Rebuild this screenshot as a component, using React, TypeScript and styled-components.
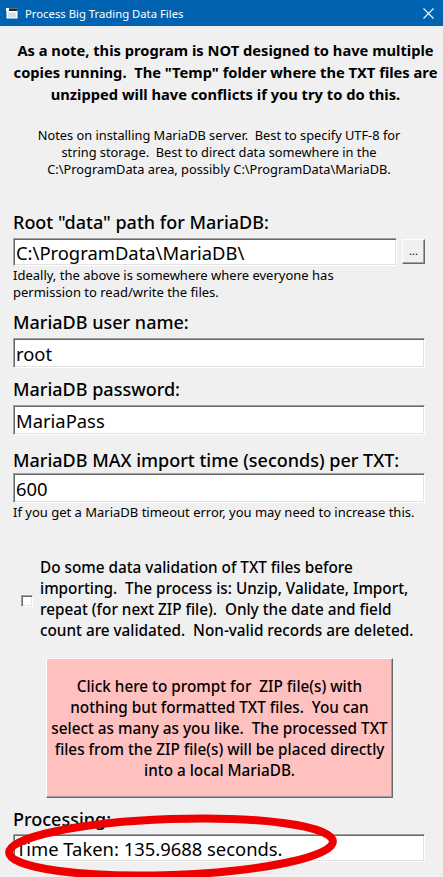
import React from "react";
import styled, { createGlobalStyle } from "styled-components";

const Global = createGlobalStyle`
  html, body { margin: 0; padding: 0; background: #f0f0f0; }
  * { box-sizing: border-box; }
`;

const Window = styled.div`
  position: relative;
  width: 443px;
  height: 877px;
  overflow: hidden;
  background: #f0f0f0;
  font-family: "Noto Sans", "Open Sans", sans-serif;
  color: #000;
  display: flex;
  flex-direction: column;
`;

const TitleBar = styled.div`
  height: 26px;
  background: #0063b1;
  display: flex;
  align-items: center;
  padding: 0 0 0 6px;
  color: #fff;
  font-size: 11.3px;
  flex-shrink: 0;
`;

const TitleText = styled.span`
  margin-left: 7px;
  flex: 1;
`;

const CloseBtn = styled.div`
  width: 30px;
  height: 26px;
  display: flex;
  align-items: center;
  justify-content: center;
`;

const Content = styled.div`
  display: flex;
  flex-direction: column;
  padding: 13px 18px 0 13px;
`;

const Warning = styled.p`
  margin: 0;
  font-weight: 700;
  font-size: 14.7px;
  line-height: 22px;
  text-align: center;
  white-space: pre;
  margin-left: -4px;
  margin-right: -17px;
`;

const Notes = styled.p`
  margin: 22px 0 0;
  font-size: 12.8px;
  line-height: 17px;
  text-align: center;
  white-space: pre;
`;

const Label = styled.div<{ $top: number }>`
  margin-top: ${(p) => p.$top}px;
  font-size: 18px;
  line-height: 24px;
  font-weight: 500;
  white-space: pre;
`;

const FieldRow = styled.div<{ $top: number }>`
  margin-top: ${(p) => p.$top}px;
  display: flex;
  align-items: flex-start;
  gap: 5px;
`;

const Field = styled.div<{ $h: number }>`
  flex: 1;
  height: ${(p) => p.$h}px;
  background: #fff;
  border-style: solid;
  border-width: 1px;
  border-color: #a0a0a0 #fff #fff #a0a0a0;
  box-shadow: inset 1px 1px 0 #696969, inset -1px -1px 0 #e3e3e3;
  display: flex;
  align-items: center;
  padding-left: 2px;
  font-size: 18.4px;
  white-space: pre;
  overflow: hidden;
`;

const BrowseBtn = styled.div`
  width: 23px;
  height: 25px;
  margin-top: 1px;
  background: #f0f0f0;
  border-style: solid;
  border-width: 1px;
  border-color: #fff #696969 #696969 #fff;
  box-shadow: inset -1px -1px 0 #a0a0a0;
  display: flex;
  align-items: center;
  justify-content: center;
  font-size: 11px;
  line-height: 1;
  padding-bottom: 2px;
`;

const Helper = styled.p`
  margin: 1px 0 0;
  font-size: 13px;
  line-height: 17px;
  white-space: pre;
`;

const CheckRow = styled.div`
  margin-top: 36px;
  display: flex;
  align-items: center;
  gap: 7px;
  margin-left: 8px;
`;

const Box = styled.div`
  width: 12px;
  height: 12px;
  flex-shrink: 0;
  background: #fff;
  border-style: solid;
  border-width: 1px;
  border-color: #a0a0a0 #fff #fff #a0a0a0;
  box-shadow: inset 1px 1px 0 #696969, inset -1px -1px 0 #e3e3e3;
  margin-top: 4px;
`;

const CheckText = styled.div`
  font-size: 15.3px;
  line-height: 21px;
  font-weight: 500;
  white-space: pre;
`;

const BigButton = styled.div`
  margin: 17px 32px 0 33px;
  height: 140px;
  background: #ffc0c0;
  border-style: solid;
  border-width: 1px;
  border-color: #fff #696969 #696969 #fff;
  box-shadow: inset -1px -1px 0 #a0a0a0;
  display: flex;
  align-items: center;
  justify-content: center;
  text-align: center;
  font-size: 15.3px;
  line-height: 21px;
  font-weight: 500;
  white-space: pre;
`;

const Circle = styled.svg`
  position: absolute;
  left: 0;
  top: 800px;
  pointer-events: none;
`;

export default function App() {
  return (
    <>
      <Global />
      <Window>
        <TitleBar>
          <svg width="12" height="11" viewBox="0 0 12 11">
            <rect x="0.5" y="0.5" width="11" height="10" fill="#fff" />
            <rect x="0.5" y="0.5" width="11" height="2.5" fill="#1e2a38" />
            <rect x="2" y="4.5" width="8" height="5" fill="#d9dde2" />
            <rect x="0" y="0" width="3" height="3" fill="#fff" />
          </svg>
          <TitleText>Process Big Trading Data Files</TitleText>
          <CloseBtn>
            <svg width="11" height="11" viewBox="0 0 11 11">
              <path d="M0.5 0.5 L10.5 10.5 M10.5 0.5 L0.5 10.5" stroke="#fff" strokeWidth="1.1" />
            </svg>
          </CloseBtn>
        </TitleBar>
        <Content>
          <Warning>
            {"As a note, this program is NOT designed to have multiple\ncopies running.  The \"Temp\" folder where the TXT files are\nunzipped will have conflicts if you try to do this."}
          </Warning>
          <Notes>
            {"Notes on installing MariaDB server.  Best to specify UTF-8 for\nstring storage.  Best to direct data somewhere in the\nC:\\ProgramData area, possibly C:\\ProgramData\\MariaDB."}
          </Notes>
          <Label $top={32}>Root "data" path for MariaDB:</Label>
          <FieldRow $top={4}>
            <Field $h={28}>C:\ProgramData\MariaDB\</Field>
            <BrowseBtn>...</BrowseBtn>
          </FieldRow>
          <Helper>{"Ideally, the above is somewhere where everyone has\npermission to read/write the files."}</Helper>
          <Label $top={9}>MariaDB user name:</Label>
          <FieldRow $top={4}>
            <Field $h={30}>root</Field>
          </FieldRow>
          <Label $top={9}>MariaDB password:</Label>
          <FieldRow $top={4}>
            <Field $h={30}>MariaPass</Field>
          </FieldRow>
          <Label $top={13}>MariaDB MAX import time (seconds) per TXT:</Label>
          <FieldRow $top={1}>
            <Field $h={30}>600</Field>
          </FieldRow>
          <Helper>If you get a MariaDB timeout error, you may need to increase this.</Helper>
          <CheckRow>
            <Box />
            <CheckText>
              {"Do some data validation of TXT files before\nimporting.  The process is: Unzip, Validate, Import,\nrepeat (for next ZIP file).  Only the date and field\ncount are validated.  Non-valid records are deleted."}
            </CheckText>
          </CheckRow>
          <BigButton>
            {"Click here to prompt for  ZIP file(s) with\nnothing but formatted TXT files.  You can\nselect as many as you like.  The processed TXT\nfiles from the ZIP file(s) will be placed directly\ninto a local MariaDB."}
          </BigButton>
          <Label $top={9}>Processing:</Label>
          <FieldRow $top={3}>
            <Field $h={28}>Time Taken: 135.9688 seconds.</Field>
          </FieldRow>
        </Content>
        <Circle width="443" height="77" viewBox="0 800 443 77">
          <ellipse cx="171" cy="847" rx="162" ry="28" fill="none" stroke="#ee0000" strokeWidth="8" transform="rotate(-2 171 847)" />
        </Circle>
      </Window>
    </>
  );
}
